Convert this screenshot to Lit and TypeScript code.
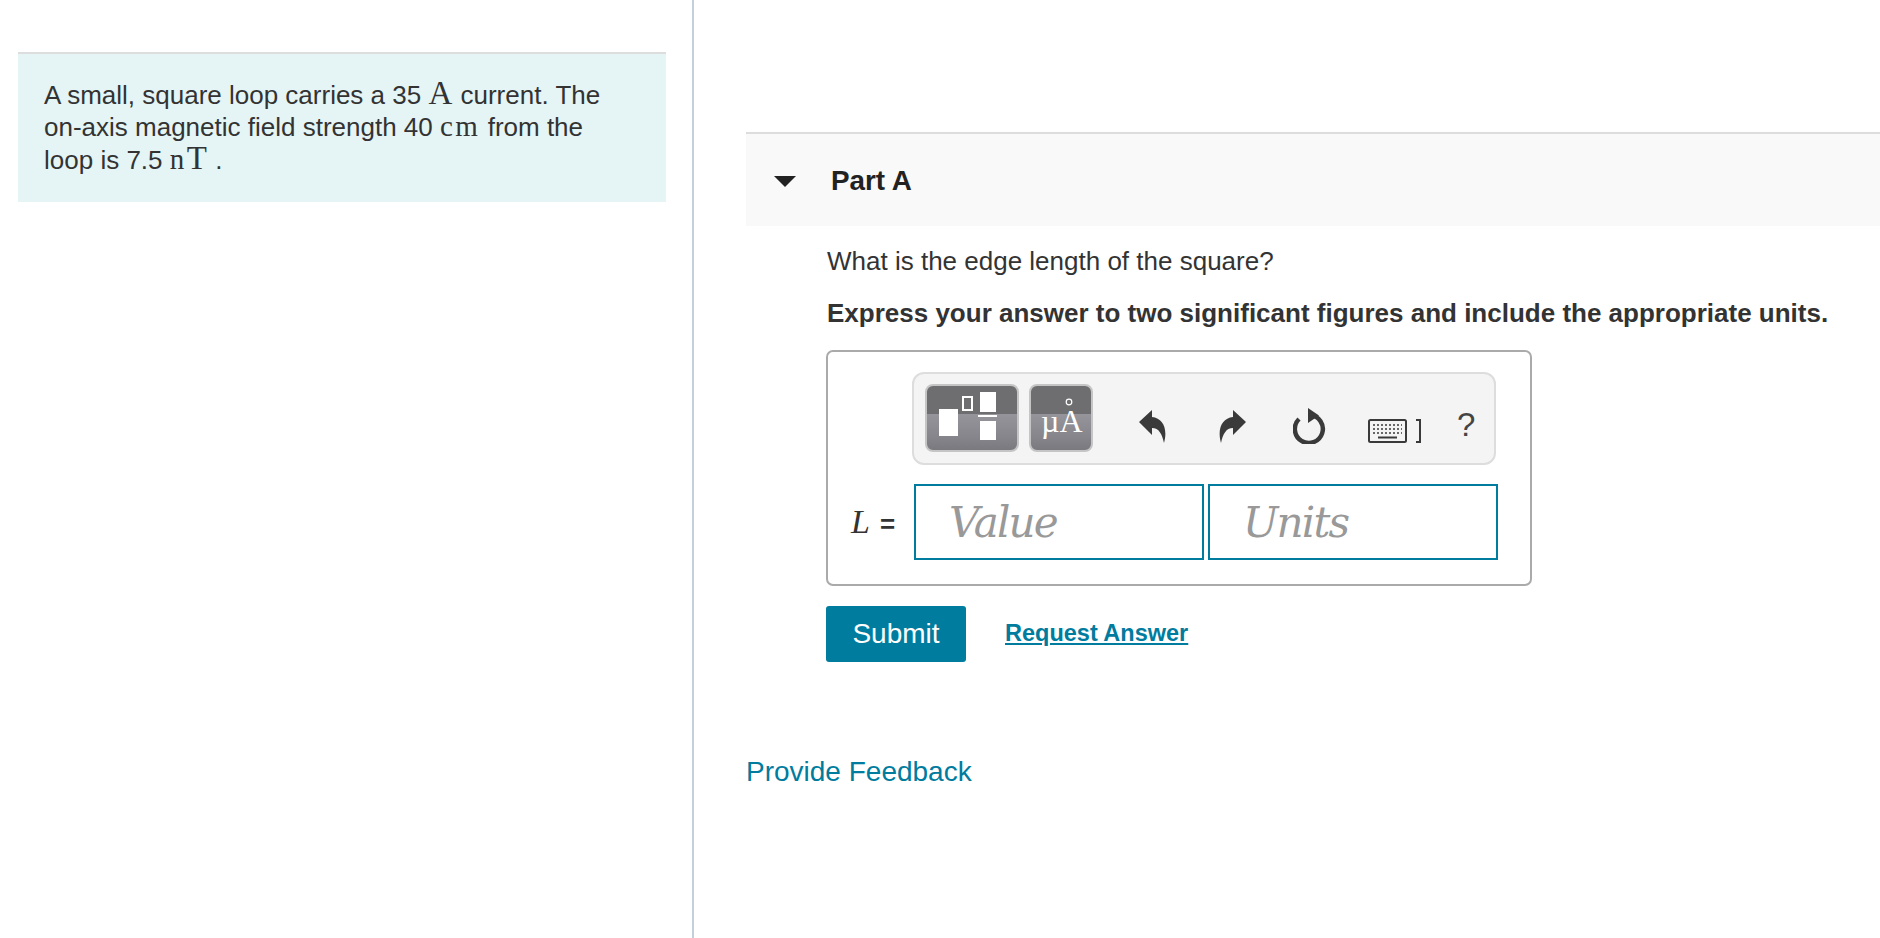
import { LitElement, html, css } from 'lit';
import { customElement } from 'lit/decorators.js';

@customElement('app-root')
export class AppRoot extends LitElement {
  static styles = css`
    :host {
      display: flex;
      height: 938px;
      overflow: hidden;
      background: #fff;
      font-family: 'Liberation Sans', Arial, sans-serif;
      font-size: 26px;
      color: #333;
    }
    .left {
      flex: none;
      width: 694px;
      box-sizing: border-box;
      border-right: 2px solid #c3d0dc;
      padding: 52px 0 0 18px;
    }
    .intro {
      width: 648px;
      height: 150px;
      box-sizing: border-box;
      background: #e5f5f6;
      border-top: 2px solid #ddd;
      padding: 24.8px 40px 0 26px;
      line-height: 32.5px;
    }
    .m {
      font-family: 'Liberation Serif', serif;
      font-size: 29px;
      letter-spacing: 2.5px;
      line-height: 1px;
    }
    .cap {
      font-size: 33px;
      letter-spacing: 1px;
    }
    .right {
      flex: 1;
      padding: 132px 0 0 52px;
      min-width: 0;
    }
    .head {
      height: 92px;
      background: #f9f9f9;
      border-top: 2px solid #ddd;
      display: flex;
      align-items: center;
      padding-left: 28px;
    }
    .tri {
      width: 0;
      height: 0;
      border-left: 11px solid transparent;
      border-right: 11px solid transparent;
      border-top: 11px solid #222;
      margin-top: 2px;
    }
    .part {
      margin-left: 35px;
      font-weight: 700;
      color: #222;
      font-size: 27.8px;
      padding-top: 1px;
    }
    .body {
      padding: 19px 0 0 80px;
    }
    .q {
      line-height: 32px;
      margin: 0 0 0 1px;
    }
    .ins {
      line-height: 32px;
      margin: 20px 0 0 1px;
      font-weight: 700;
    }
    .box {
      margin-top: 21px;
      width: 706px;
      height: 236px;
      box-sizing: border-box;
      border: 2px solid #aaa;
      border-radius: 7px;
      padding: 20px 0 0 84px;
    }
    .tools {
      width: 584px;
      height: 93px;
      box-sizing: border-box;
      background: #f4f4f4;
      border: 2px solid #ddd;
      border-radius: 12px;
      position: relative;
      display: flex;
      align-items: flex-start;
      padding: 10px 0 0 11px;
      gap: 10px;
    }
    .tb {
      height: 68px;
      box-sizing: border-box;
      border: 2px solid #c5c5c5;
      border-radius: 8px;
      background: linear-gradient(#6e6e70 0, #6e6e70 43%, #96959c 43%, #86858b 80%, #7a797e 100%);
      flex: none;
    }
    .tb svg { display: block; }
    .t1 { width: 94px; }
    .t2 { width: 64px; }
    .ic {
      position: absolute;
      display: block;
    }
    .undo { left: 225px; top: 36px; }
    .redo { left: 304px; top: 36px; }
    .reset { left: 379px; top: 34px; }
    .keys { left: 454px; top: 45px; }
    .help {
      position: absolute;
      left: 543px;
      top: 33px;
      font-size: 33px;
      line-height: 36px;
      color: #444;
    }
    .row {
      display: flex;
      align-items: center;
      margin-top: 19px;
      margin-left: -61px;
    }
    .lab {
      width: 63px;
      font-family: 'Liberation Serif', serif;
      color: #333;
      white-space: nowrap;
    }
    .lab i { font-size: 34px; }
    .lab span {
      font-family: 'Liberation Sans', sans-serif;
      font-size: 26px;
      font-weight: 700;
      margin-left: 10px;
    }
    .inp {
      width: 290px;
      height: 76px;
      box-sizing: border-box;
      border: 2px solid #007c9e;
      margin-right: 4px;
      font-family: 'DejaVu Serif', serif;
      font-style: italic;
      font-size: 42px;
      color: #999;
      padding: 0 0 0 33px;
      display: flex;
      align-items: center;
      letter-spacing: -1.8px;
    }
    .acts {
      display: flex;
      align-items: center;
      margin-top: 20px;
    }
    .btn {
      width: 140px;
      height: 56px;
      background: #007c9e;
      color: #fff;
      border-radius: 3px;
      display: flex;
      align-items: center;
      justify-content: center;
      font-size: 28px;
    }
    .req {
      margin-left: 39px;
      color: #007c9e;
      font-weight: 700;
      text-decoration: underline;
      font-size: 23.5px;
      margin-top: -2px;
    }
    .fb {
      margin-top: 94px;
      color: #007c9e;
      font-size: 28px;
    }
  `;

  render() {
    return html`
      <div class="left">
        <div class="intro">
          A small, square loop carries a 35 <span class="m cap">A</span> current. The
          on-axis magnetic field strength 40 <span class="m">cm</span> from the
          loop is 7.5 <span class="m">n</span><span class="m cap">T</span> .
        </div>
      </div>
      <div class="right">
        <div class="head">
          <span class="tri"></span>
          <span class="part">Part A</span>
        </div>
        <div class="body">
          <p class="q">What is the edge length of the square?</p>
          <p class="ins">Express your answer to two significant figures and include the appropriate units.</p>
          <div class="box">
            <div class="tools">
              <div class="tb t1">
                <svg width="90" height="64" viewBox="0 0 90 64">
                  <rect x="12" y="23" width="19" height="27" fill="#fff"></rect>
                  <rect x="36" y="11" width="9" height="13" fill="none" stroke="#fff" stroke-width="2"></rect>
                  <rect x="53" y="6" width="16" height="20" fill="#fff"></rect>
                  <rect x="51" y="29" width="19" height="2" fill="#fff"></rect>
                  <rect x="53" y="35" width="16" height="19" fill="#fff"></rect>
                </svg>
              </div>
              <div class="tb t2">
                <svg width="60" height="64" viewBox="0 0 60 64">
                  <circle cx="38" cy="16" r="2.8" fill="none" stroke="#fff" stroke-width="1.2"></circle>
                  <text x="10" y="46" font-family="Liberation Serif" font-size="32" fill="#fff">µA</text>
                </svg>
              </div>
              ${this.renderIcons()}
              <span class="help">?</span>
            </div>
            <div class="row">
              <div class="lab"><i>L</i><span>=</span></div>
              <div class="inp">Value</div>
              <div class="inp">Units</div>
            </div>
          </div>
          <div class="acts">
            <div class="btn">Submit</div>
            <div class="req">Request Answer</div>
          </div>
        </div>
        <div class="fb">Provide Feedback</div>
      </div>
    `;
  }

  renderIcons() {
    return html`
      <svg class="ic undo" width="28" height="33" viewBox="0 0 28 33">
        <path d="M0 12 L13 0 V7 C24 8 29 19 25 33 C23 24 20 18 13 18 V25 Z" fill="#3a3a3a"></path>
      </svg>
      <svg class="ic redo" width="28" height="33" viewBox="0 0 28 33">
        <path d="M28 12 L15 0 V7 C4 8 -1 19 3 33 C5 24 8 18 15 18 V25 Z" fill="#3a3a3a"></path>
      </svg>
      <svg class="ic reset" width="33" height="36" viewBox="0 0 33 36">
        <path d="M17 7 A14 14 0 1 1 6 11" fill="none" stroke="#3a3a3a" stroke-width="4.5"></path>
        <path d="M15 0 L26 7.5 L15 15 Z" fill="#3a3a3a"></path>
      </svg>
      <svg class="ic keys" width="54" height="24" viewBox="0 0 54 24">
        <rect x="1" y="1" width="37" height="22" rx="1.5" fill="#f4f4f4" stroke="#3a3a3a" stroke-width="2"></rect>
        <path d="M5 6H34M5 10H34M5 14H34" stroke="#3a3a3a" stroke-width="1.6" stroke-dasharray="2 2"></path>
        <path d="M10 18.5H29" stroke="#3a3a3a" stroke-width="2"></path>
        <path d="M48 1H52V23H48" fill="none" stroke="#3a3a3a" stroke-width="2"></path>
      </svg>
    `;
  }
}
